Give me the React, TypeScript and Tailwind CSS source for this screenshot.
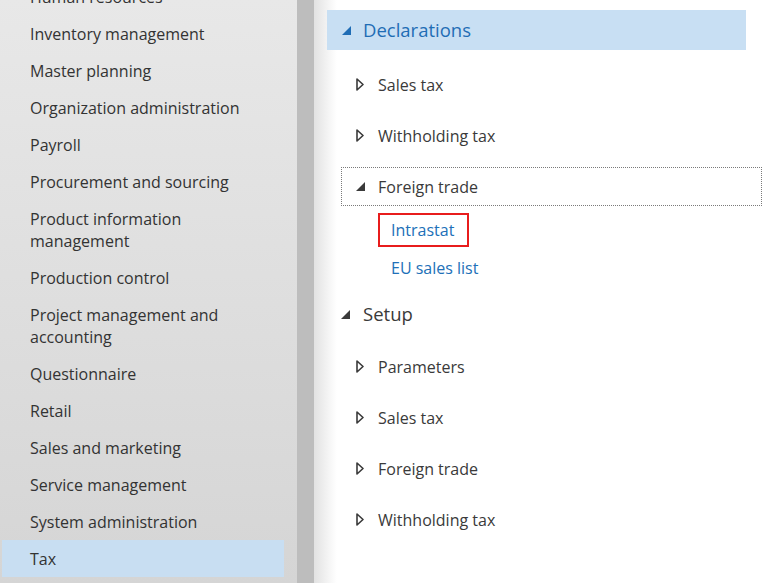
const modules = [
    "Human resources",
    "Inventory management",
    "Master planning",
    "Organization administration",
    "Payroll",
    "Procurement and sourcing",
    "Product information management",
    "Production control",
    "Project management and accounting",
    "Questionnaire",
    "Retail",
    "Sales and marketing",
    "Service management",
    "System administration",
    "Tax",
];

function Expanded({ color }: { color: string }) {
    return (
        <svg width="9" height="9" viewBox="0 0 9 9" className="shrink-0">
            <polygon points="9,0 9,9 0,9" fill={color} />
        </svg>
    );
}

function Collapsed() {
    return (
        <svg width="8" height="13" viewBox="0 0 8 13" className="shrink-0">
            <polygon points="1,1 7,6.5 1,12" fill="none" stroke="#3a3a3a" strokeWidth="1.6" strokeLinejoin="round" />
        </svg>
    );
}

function Item({ label }: { label: string }) {
    return (
        <div className="mt-[12px] flex h-[39px] w-[421px] items-center pl-[15px] first:mt-0">
            <Collapsed />
            <span className="ml-[14px] text-[16px] text-[#3a3a3a]">{label}</span>
        </div>
    );
}

function App() {
    return (
        <div className="flex h-[583px] w-[768px] overflow-hidden bg-white" style={{ fontFamily: '"Open Sans", "Noto Sans", sans-serif' }}>
            <div className="h-full w-[297px] shrink-0 bg-gradient-to-b from-[#e8e8e8] to-[#d5d5d5]">
                <div className="-mt-[22px] flex flex-col pl-[2px] pr-[13px]">
                    {modules.map(m => (
                        <div
                            key={m}
                            className={
                                "py-[7.5px] pl-[28px] text-[16px] leading-[22px] text-[#333333] " +
                                (m === "Tax" ? "bg-[#c8def2]" : "")
                            }
                        >
                            <span className="block w-[225px]">{m}</span>
                        </div>
                    ))}
                </div>
            </div>

            <div className="h-full w-[17px] shrink-0 bg-[#bdbdbd]" />

            <div className="flex-1 bg-gradient-to-r from-[#e2e2e2] via-white via-[5%] to-white pl-[13px] pt-[10px]">
                <div className="flex h-[40px] w-[419px] items-center bg-[#c8dff3] pl-[15px]">
                    <Expanded color="#1f6db5" />
                    <span className="ml-[12px] text-[18.5px] text-[#1f6db5]">Declarations</span>
                </div>

                <div className="ml-[14px] mt-[15px] flex flex-col">
                    <Item label="Sales tax" />
                    <Item label="Withholding tax" />
                    <div className="mt-[12px] flex h-[39px] w-[421px] items-center border border-dotted border-[#7a7a7a] pl-[14px]">
                        <Expanded color="#3a3a3a" />
                        <span className="ml-[13px] text-[16px] text-[#3a3a3a]">Foreign trade</span>
                    </div>
                    <div className="ml-[37px] mt-[7px] flex h-[34px] w-[91px] items-center border-2 border-[#e81c1c] pl-[11px]">
                        <span className="text-[16px] text-[#2170b8]">Intrastat</span>
                    </div>
                    <div className="ml-[50px] mt-[4px] flex h-[34px] items-center">
                        <span className="text-[16px] text-[#2170b8]">EU sales list</span>
                    </div>
                </div>

                <div className="mt-[10px] flex h-[38px] items-center pl-[14px]">
                    <Expanded color="#3a3a3a" />
                    <span className="ml-[13px] text-[18.5px] text-[#3a3a3a]">Setup</span>
                </div>

                <div className="ml-[14px] mt-[14px] flex flex-col">
                    <Item label="Parameters" />
                    <Item label="Sales tax" />
                    <Item label="Foreign trade" />
                    <Item label="Withholding tax" />
                </div>
            </div>
        </div>
    );
}

export default App;
